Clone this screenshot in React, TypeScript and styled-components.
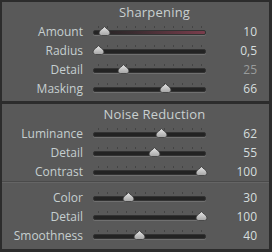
import React from "react";
import styled, { createGlobalStyle } from "styled-components";

const Global = createGlobalStyle`
  html, body { margin: 0; padding: 0; background: #2c2c2c; }
  body { font-family: "Open Sans", "Noto Sans", sans-serif; }
`;

const Frame = styled.div`
  width: 272px;
  height: 252px;
  box-sizing: border-box;
  background: #2c2c2c;
  padding: 2px 3px 3px 2px;
  display: flex;
  flex-direction: column;
`;

const Panel = styled.div<{ $grow?: boolean }>`
  background: #595959;
  display: flex;
  flex-direction: column;
  padding: 1px 0 3px 0;
  flex: ${(p) => (p.$grow ? 1 : "none")};
`;

const Divider = styled.div`
  height: 2px;
  background: #2c2c2c;
  margin-bottom: 1px;
  flex: none;
`;

const Separator = styled.div`
  height: 1px;
  margin: 0 0 5px 0;
  background: #4a4a4a;
  border-bottom: 1px solid #656565;
`;

const Title = styled.div`
  height: 19px;
  line-height: 19px;
  text-align: center;
  padding-left: 38px;
  font-size: 13px;
  color: #c9d0d0;
  letter-spacing: 0.2px;
`;

const Row = styled.div`
  height: 19px;
  display: grid;
  grid-template-columns: 81px 10px 113px 51px;
  align-items: center;
`;

const Label = styled.div`
  text-align: right;
  font-size: 12px;
  color: #c6cfd0;
  grid-column: 1;
`;

const Value = styled.div<{ $dim?: boolean }>`
  grid-column: 4;
  text-align: right;
  font-size: 12px;
  color: ${(p) => (p.$dim ? "#999c9c" : "#d6dede")};
`;

const SliderBox = styled.div`
  grid-column: 3;
  position: relative;
  height: 19px;
`;

const Track = styled.div<{ $tint?: boolean }>`
  position: absolute;
  left: 0;
  right: 0;
  top: 8px;
  height: 3px;
  border-radius: 2px;
  background: ${(p) =>
    p.$tint
      ? "linear-gradient(to right, #232323 0%, #3a2c30 35%, #7a3d4c 100%)"
      : "#232323"};
  border: 1px solid #333;
  box-shadow: 0 1px 0 #707070;
`;

const Tick = styled.div`
  position: absolute;
  top: 4px;
  width: 1px;
  height: 2px;
  background: #444;
`;

const Thumb = styled.svg`
  position: absolute;
  top: 4px;
  width: 13px;
  height: 10px;
  overflow: visible;
`;

type Item = { label: string; value: string; pos: number; dim?: boolean; tint?: boolean };

const ticks = Array.from({ length: 12 }, (_, i) => 5 + (i * 103) / 11);

function Slider({ pos, tint }: { pos: number; tint?: boolean }) {
  const x = 5 + pos * 103;
  return (
    <SliderBox>
      {ticks.map((t, i) => (
        <Tick key={i} style={{ left: `${Math.round(t)}px` }} />
      ))}
      <Track $tint={tint} />
      <Thumb viewBox="0 0 13 10" style={{ left: `${Math.round(x - 6.5)}px` }}>
        <defs>
          <linearGradient id="tg" x1="0" y1="0" x2="0" y2="1">
            <stop offset="0" stopColor="#e8e8e8" />
            <stop offset="1" stopColor="#a4a4a4" />
          </linearGradient>
        </defs>
        <path
          d="M6.5 0.5 C7.5 2.5 12 4 12 7 Q12 9.5 9.5 9.5 H3.5 Q1 9.5 1 7 C1 4 5.5 2.5 6.5 0.5 Z"
          fill="url(#tg)"
          stroke="#3a3a3a"
          strokeWidth="0.8"
        />
      </Thumb>
    </SliderBox>
  );
}

function SliderRow({ item }: { item: Item }) {
  return (
    <Row>
      <Label>{item.label}</Label>
      <Slider pos={item.pos} tint={item.tint} />
      <Value $dim={item.dim}>{item.value}</Value>
    </Row>
  );
}

const sharpening: Item[] = [
  { label: "Amount", value: "10", pos: 10 / 150, tint: true },
  { label: "Radius", value: "0,5", pos: 0 },
  { label: "Detail", value: "25", pos: 0.25, dim: true },
  { label: "Masking", value: "66", pos: 0.66 },
];

const luminance: Item[] = [
  { label: "Luminance", value: "62", pos: 0.62 },
  { label: "Detail", value: "55", pos: 0.55 },
  { label: "Contrast", value: "100", pos: 1 },
];

const color: Item[] = [
  { label: "Color", value: "30", pos: 0.3 },
  { label: "Detail", value: "100", pos: 1 },
  { label: "Smoothness", value: "40", pos: 0.4 },
];

export default function App() {
  return (
    <>
      <Global />
      <Frame>
        <Panel>
          <Title>Sharpening</Title>
          {sharpening.map((it) => (
            <SliderRow key={it.label} item={it} />
          ))}
        </Panel>
        <Divider />
        <Panel $grow>
          <Title>Noise Reduction</Title>
          {luminance.map((it) => (
            <SliderRow key={it.label} item={it} />
          ))}
          <Separator />
          {color.map((it) => (
            <SliderRow key={"c" + it.label} item={it} />
          ))}
        </Panel>
      </Frame>
    </>
  );
}
